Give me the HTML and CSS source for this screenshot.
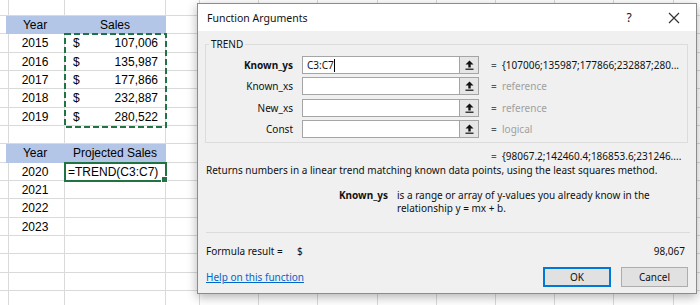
FILE: index.html
```html
<!DOCTYPE html>
<html lang="en">
<head>
    <meta charset="UTF-8">
    <title>TREND - Function Arguments</title>
    <link rel="stylesheet" href="styles.css">
</head>
<body>

    <div class="sheet">
        <div class="row first"><div class="cell"></div><div class="cell"></div><div class="cell"></div><div class="cell"></div><div class="cell rest"></div></div>
        <div class="row"><div class="cell"></div><div class="cell head center">Year</div><div class="cell head center">Sales</div><div class="cell"></div><div class="cell rest"></div></div>
        <div class="row"><div class="cell"></div><div class="cell center">2015</div><div class="cell money"><span>$</span><span>107,006</span></div><div class="cell"></div><div class="cell rest"></div></div>
        <div class="row"><div class="cell"></div><div class="cell center">2016</div><div class="cell money"><span>$</span><span>135,987</span></div><div class="cell"></div><div class="cell rest"></div></div>
        <div class="row"><div class="cell"></div><div class="cell center">2017</div><div class="cell money"><span>$</span><span>177,866</span></div><div class="cell"></div><div class="cell rest"></div></div>
        <div class="row"><div class="cell"></div><div class="cell center">2018</div><div class="cell money"><span>$</span><span>232,887</span></div><div class="cell"></div><div class="cell rest"></div></div>
        <div class="row"><div class="cell"></div><div class="cell center">2019</div><div class="cell money"><span>$</span><span>280,522</span></div><div class="cell"></div><div class="cell rest"></div></div>
        <div class="row"><div class="cell"></div><div class="cell"></div><div class="cell"></div><div class="cell"></div><div class="cell rest"></div></div>
        <div class="row"><div class="cell"></div><div class="cell head center">Year</div><div class="cell head center">Projected Sales</div><div class="cell"></div><div class="cell rest"></div></div>
        <div class="row"><div class="cell"></div><div class="cell center">2020</div><div class="cell selected">=TREND(C3:C7)</div><div class="cell"></div><div class="cell rest"></div></div>
        <div class="row"><div class="cell"></div><div class="cell center">2021</div><div class="cell"></div><div class="cell"></div><div class="cell rest"></div></div>
        <div class="row"><div class="cell"></div><div class="cell center">2022</div><div class="cell"></div><div class="cell"></div><div class="cell rest"></div></div>
        <div class="row"><div class="cell"></div><div class="cell center">2023</div><div class="cell"></div><div class="cell"></div><div class="cell rest"></div></div>
        <div class="row"><div class="cell"></div><div class="cell"></div><div class="cell"></div><div class="cell"></div><div class="cell rest"></div></div>
        <div class="row"><div class="cell"></div><div class="cell"></div><div class="cell"></div><div class="cell"></div><div class="cell rest"></div></div>
        <div class="row"><div class="cell"></div><div class="cell"></div><div class="cell"></div><div class="cell"></div><div class="cell rest"></div></div>
        <div class="row"><div class="cell"></div><div class="cell"></div><div class="cell"></div><div class="cell"></div><div class="cell rest"></div></div>

        <!-- copy marquee round C3:C7 -->
        <svg class="ants" width="103" height="95" viewBox="0 0 103 95">
            <rect x="1" y="1" width="101" height="93" fill="none" stroke="#217346" stroke-width="2" stroke-dasharray="6 3"/>
        </svg>
    </div>

    <div class="dialog">
        <div class="titlebar">
            <span class="title">Function Arguments</span>
            <span class="help-btn">?</span>
            <svg class="close" width="12" height="12" viewBox="0 0 12 12">
                <path d="M1 1 L11 11 M11 1 L1 11" stroke="#333" stroke-width="1.2" fill="none"/>
            </svg>
        </div>

        <fieldset class="group">
            <legend>TREND</legend>
            <div class="args">
                <label class="bold">Known_ys</label>
                <div class="field"><span class="text">C3:C7<span class="caret"></span></span><span class="pick"><svg width="9" height="10" viewBox="0 0 9 10"><path d="M4.5 0.5 L8.5 4.5 L5.7 4.5 L5.7 7.5 L3.3 7.5 L3.3 4.5 L0.5 4.5 Z" fill="#111"/><rect x="0.5" y="8.6" width="8" height="1.2" fill="#111"/></svg></span></div>
                <div class="val"><span class="eq">=</span>{107006;135987;177866;232887;280...</div>

                <label>Known_xs</label>
                <div class="field"><span class="text"></span><span class="pick"><svg width="9" height="10" viewBox="0 0 9 10"><path d="M4.5 0.5 L8.5 4.5 L5.7 4.5 L5.7 7.5 L3.3 7.5 L3.3 4.5 L0.5 4.5 Z" fill="#111"/><rect x="0.5" y="8.6" width="8" height="1.2" fill="#111"/></svg></span></div>
                <div class="val muted"><span class="eq">=</span>reference</div>

                <label>New_xs</label>
                <div class="field"><span class="text"></span><span class="pick"><svg width="9" height="10" viewBox="0 0 9 10"><path d="M4.5 0.5 L8.5 4.5 L5.7 4.5 L5.7 7.5 L3.3 7.5 L3.3 4.5 L0.5 4.5 Z" fill="#111"/><rect x="0.5" y="8.6" width="8" height="1.2" fill="#111"/></svg></span></div>
                <div class="val muted"><span class="eq">=</span>reference</div>

                <label>Const</label>
                <div class="field"><span class="text"></span><span class="pick"><svg width="9" height="10" viewBox="0 0 9 10"><path d="M4.5 0.5 L8.5 4.5 L5.7 4.5 L5.7 7.5 L3.3 7.5 L3.3 4.5 L0.5 4.5 Z" fill="#111"/><rect x="0.5" y="8.6" width="8" height="1.2" fill="#111"/></svg></span></div>
                <div class="val muted"><span class="eq">=</span>logical</div>
            </div>
        </fieldset>

        <div class="result-line"><span class="eq">=</span>{98067.2;142460.4;186853.6;231246....</div>
        <div class="desc">Returns numbers in a linear trend matching known data points, using the least squares method.</div>

        <div class="arg-help">
            <span class="bold">Known_ys</span>
            <span>is a range or array of y-values you already know in the relationship y = mx + b.</span>
        </div>

        <div class="separator"></div>

        <div class="formula">
            <span>Formula result =</span>
            <span>$</span>
            <span class="amount">98,067</span>
        </div>

        <div class="footer">
            <a href="#" class="link">Help on this function</a>
            <button class="btn ok">OK</button>
            <button class="btn">Cancel</button>
        </div>
    </div>

</body>
</html>
```

FILE: styles.css
```css
body {
    margin: 0;
    width: 700px;
    height: 305px;
    overflow: hidden;
    background-color: #fff;
    position: relative;
}

/* spreadsheet behind the dialog */
.sheet {
    position: relative;
    font-family: 'Liberation Sans', Arial, sans-serif;
    font-size: 12px;
    color: #000;
}

.row {
    display: grid;
    grid-template-columns: 6px 59px 101px 34px 1fr;
    height: 18.33px;
}

.row.first {
    height: 16px;
}

.cell {
    box-sizing: border-box;
    border-right: 1px solid #dadada;
    border-bottom: 1px solid #dadada;
    display: flex;
    align-items: center;
    padding: 1px 4px 0;
    white-space: nowrap;
}

.cell.rest {
    border-right: none;
    background-image: repeating-linear-gradient(90deg, transparent 0 58.2px, #dadada 58.2px 59.2px);
}

.cell.head {
    background-color: #b4c6e7;
    border-color: #b4c6e7;
}

.center {
    justify-content: center;
}

.money {
    justify-content: space-between;
    padding: 1px 7px 0 8px;
}

.selected {
    position: relative;
    padding-left: 3px;
    outline: 2px solid #217346;
    outline-offset: -1px;
}

.selected::after {
    content: '';
    position: absolute;
    right: -3px;
    bottom: -3px;
    width: 5px;
    height: 5px;
    background-color: #217346;
    border: 1px solid #fff;
}

.ants {
    position: absolute;
    left: 64px;
    top: 33px;
}

/* Function Arguments dialog */
.dialog {
    position: absolute;
    left: 197px;
    top: 3px;
    width: 500px;
    height: 291px;
    box-sizing: border-box;
    overflow: hidden;
    background-color: #f0f0f0;
    border: 1px solid #8c8c8c;
    box-shadow: 0 3px 10px rgba(0, 0, 0, 0.3);
    font-family: 'Noto Sans', 'Open Sans', sans-serif;
    font-size: 10px;
    color: #111;
}

.titlebar {
    height: 27px;
    background-color: #fff;
    display: grid;
    grid-template-columns: 1fr 10px 12px;
    column-gap: 34px;
    align-items: center;
    padding: 0 16px 0 9px;
}

.title {
    font-size: 10.5px;
}

.help-btn {
    font-size: 12px;
    text-align: center;
}

.close {
    display: block;
}

.group {
    margin: 6px 8px 0 7px;
    padding: 5px 0 4px;
    border: 1px solid #dcdcdc;
    min-width: 0;
}

.group legend {
    padding: 0 2px;
    margin-left: 3px;
}

.args {
    display: grid;
    grid-template-columns: 87px 177px minmax(0, 1fr);
    grid-auto-rows: 18px;
    row-gap: 3.4px;
    column-gap: 9px;
    align-items: center;
}

.args label {
    text-align: right;
}

.bold {
    font-weight: bold;
}

.field {
    display: flex;
    height: 18px;
    box-sizing: border-box;
    border: 1px solid #a5a5a5;
    background-color: #fff;
}

.field .text {
    flex: 1;
    padding-left: 4px;
    line-height: 16px;
}

.caret {
    display: inline-block;
    width: 1px;
    height: 13px;
    background-color: #000;
    vertical-align: -3px;
}

.pick {
    width: 18px;
    border-left: 1px solid #a5a5a5;
    background-color: #e6e6e6;
    display: flex;
    align-items: center;
    justify-content: center;
}

.val {
    white-space: nowrap;
    overflow: hidden;
}

.muted {
    color: #a0a0a0;
}

.eq {
    display: inline-block;
    width: 9px;
    margin-left: 3px;
    margin-right: 2px;
    color: #555;
}

.result-line {
    margin-top: 6px;
    padding-left: 290px;
    line-height: 14px;
    white-space: nowrap;
}

.desc {
    padding-left: 8px;
    line-height: 15px;
    white-space: nowrap;
}

.arg-help {
    display: grid;
    grid-template-columns: 190px 262px;
    column-gap: 9px;
    margin-top: 11px;
    line-height: 12.5px;
}

.arg-help .bold {
    text-align: right;
}

.separator {
    margin: 18px 6px 0 8px;
    border-top: 1px solid #dcdcdc;
}

.formula {
    display: grid;
    grid-template-columns: 91px 1fr auto;
    margin-top: 11px;
    padding: 0 11px 0 8px;
    line-height: 14px;
}

.footer {
    display: flex;
    align-items: center;
    margin-top: 9px;
    padding: 0 8px;
}

.link {
    flex: 1;
    color: #0066cc;
    text-decoration: underline;
}

.btn {
    font-family: 'Noto Sans', 'Open Sans', sans-serif;
    font-size: 10px;
    color: #111;
    width: 67px;
    height: 20px;
    padding: 0;
    background-color: #e1e1e1;
    border: 1px solid #adadad;
    margin-left: 10px;
}

.btn.ok {
    width: 68px;
    border: 2px solid #0078d7;
}
```
